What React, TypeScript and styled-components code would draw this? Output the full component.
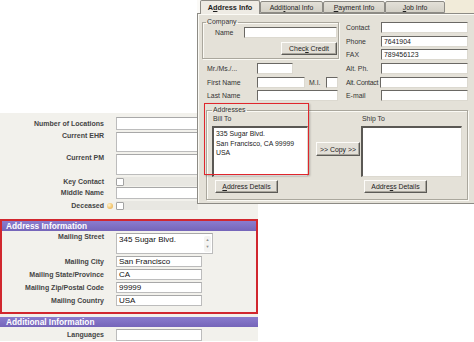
import React from 'react';
import styled, { createGlobalStyle } from 'styled-components';

const Global = createGlobalStyle`
  html, body { margin: 0; padding: 0; background: #fff; }
  body { width: 474px; height: 342px; overflow: hidden; }
`;

const Canvas = styled.div`
  position: relative;
  width: 474px;
  height: 342px;
  overflow: hidden;
  background: #fff;
  font-family: "Liberation Sans", Arial, sans-serif;
`;

/* ---------------- Web form (background) ---------------- */

const Form = styled.div`
  width: 258px;
  margin-top: 113px;
  padding-top: 4px;
  background: #f2f1ec;
  display: flex;
  flex-direction: column;
  gap: 2px;
`;

const Row = styled.div<{ $h: number; $top?: boolean }>`
  display: grid;
  grid-template-columns: 104px 12px 1fr;
  height: ${(p) => p.$h}px;
  align-items: ${(p) => (p.$top ? 'start' : 'center')};
`;

const Label = styled.div`
  text-align: right;
  font-size: 7px;
  line-height: 8px;
  font-weight: 700;
  color: #454545;
  white-space: nowrap;
`;

const HelpDot = styled.span`
  justify-self: start;
  margin-left: 3px;
  width: 6px;
  height: 6px;
  border-radius: 50%;
  background: radial-gradient(circle at 35% 35%, #fff3d6 0, #f5cf80 45%, #e6a94a 100%);
`;

const Box = styled.div<{ $w: number }>`
  grid-column: 3;
  box-sizing: border-box;
  width: ${(p) => p.$w}px;
  height: 100%;
  background: #fff;
  border: 1px solid #bcbcbc;
  border-top-color: #a8a8a8;
  font-size: 8px;
  line-height: 10px;
  color: #111;
  padding: 0 2px;
  white-space: nowrap;
  overflow: hidden;
`;

const AreaBox = styled(Box)`
  display: flex;
  justify-content: space-between;
  padding: 1px 0 0 2px;
`;

const ScrollArrows = styled.div`
  width: 7px;
  margin: 1px 1px 1px 0;
  display: flex;
  flex-direction: column;
  justify-content: space-between;
  align-items: center;
  padding: 2px 0 3px;
  border-radius: 2px;
  background: #f4f4f2;
  color: #8f8f8f;
  font-size: 4px;
  line-height: 4px;
`;

const CheckCell = styled.div`
  grid-column: 3;
  display: flex;
  align-items: center;
  width: 82px;
  height: 9px;
  background: #e8e7e2;
`;

const Check = styled.span`
  box-sizing: border-box;
  width: 8px;
  height: 8px;
  background: #fff;
  border: 1px solid #a3a3a3;
  border-radius: 1px;
`;

const Section = styled.div`
  margin-top: 8px;
  padding: 2px 0 8px;
  outline: 2px solid #d1272e;
  outline-offset: -2px;
  display: flex;
  flex-direction: column;
  gap: 2px;
`;

const SectionHeader = styled.div<{ $gap?: number }>`
  height: 10px;
  margin-top: ${(p) => p.$gap ?? 0}px;
  padding-left: 6px;
  background: linear-gradient(#8a7cce, #7565b9);
  color: #fff;
  font-size: 8.3px;
  font-weight: 700;
  line-height: 10px;
  white-space: nowrap;
`;

/* ---------------- Windows dialog (on top) ---------------- */

const Dialog = styled.div`
  position: absolute;
  left: 197px;
  top: 0;
  width: 277px;
  height: 204px;
  display: flex;
  flex-direction: column;
  font-family: "Liberation Sans", Tahoma, sans-serif;
  font-size: 6.9px;
  color: #222;
`;

const TabStrip = styled.div`
  display: flex;
  align-items: flex-end;
  height: 13px;
  padding-left: 3px;
  background: #fbfaf7;
`;

const Tab = styled.div<{ $active?: boolean; $w: number }>`
  position: relative;
  z-index: ${(p) => (p.$active ? 2 : 1)};
  box-sizing: border-box;
  width: ${(p) => p.$w}px;
  height: ${(p) => (p.$active ? 14 : 12)}px;
  margin-bottom: ${(p) => (p.$active ? -1 : 0)}px;
  display: flex;
  align-items: center;
  justify-content: center;
  background: ${(p) => (p.$active ? '#eeebe4' : 'linear-gradient(#e3e0d8, #d3d0c6)')};
  border: 1px solid #8d8b85;
  border-bottom: ${(p) => (p.$active ? 'none' : '1px solid #8d8b85')};
  border-radius: 2px 2px 0 0;
  font-weight: ${(p) => (p.$active ? 700 : 400)};
  font-size: ${(p) => (p.$active ? 7.3 : 6.9)}px;
  color: #1e1e1e;
  white-space: nowrap;
`;

const TabFiller = styled.div`
  flex: 1;
  align-self: stretch;
  background: #f1ebd9;
`;

const Panel = styled.div`
  flex: 1;
  box-sizing: border-box;
  background: #e4e1d8;
  border: 1px solid #8d8b85;
  border-right: none;
  box-shadow: inset 1px 1px 0 #fbfaf5;
  padding: 4px 6px 0 4px;
  display: flex;
  flex-direction: column;
`;

const TopArea = styled.div`
  display: flex;
  gap: 7px;
  align-items: flex-start;
`;

const LeftCol = styled.div`
  width: 137px;
  display: flex;
  flex-direction: column;
`;

const Group = styled.fieldset<{ $pl: number; $pr: number; $pb: number }>`
  margin: 0;
  min-width: 0;
  box-sizing: border-box;
  padding: 1px ${(p) => p.$pr}px ${(p) => p.$pb}px ${(p) => p.$pl}px;
  border: 1px solid #aaa79d;
  box-shadow: inset 1px 1px 0 #fbfaf5, 1px 1px 0 #fbfaf5;
`;

const Legend = styled.legend`
  padding: 0 1px;
  font-size: 6.9px;
  line-height: 8px;
  color: #333;
`;

const GroupBody = styled.div`
  display: flex;
  flex-direction: column;
`;

const DRow = styled.div<{ $indent?: number; $lw: number }>`
  display: grid;
  grid-template-columns: ${(p) => p.$lw}px auto auto auto;
  justify-content: start;
  align-items: center;
  height: 11px;
  padding-left: ${(p) => p.$indent ?? 0}px;
  white-space: nowrap;
  color: #333;
`;

const DText = styled.span<{ $tight?: boolean }>`
  letter-spacing: ${(p) => (p.$tight ? '-0.3px' : 'normal')};
`;

const DInput = styled.div<{ $w: number; $ml?: number }>`
  box-sizing: border-box;
  width: ${(p) => p.$w}px;
  margin-left: ${(p) => p.$ml ?? 0}px;
  height: 11px;
  background: #fff;
  border: 1px solid #dcd9d0;
  border-top-color: #6a6864;
  border-left-color: #6a6864;
  padding: 0 2px;
  font-size: 6.9px;
  line-height: 9px;
  color: #222;
`;

const DLabelInline = styled.span<{ $w: number; $ml: number }>`
  width: ${(p) => p.$w}px;
  margin-left: ${(p) => p.$ml}px;
`;

const DButton = styled.div<{ $w: number; $h?: number }>`
  box-sizing: border-box;
  width: ${(p) => p.$w}px;
  height: ${(p) => p.$h ?? 13}px;
  display: flex;
  align-items: center;
  justify-content: center;
  background: #e2dfd7;
  border: 1px solid #5c5b57;
  border-top-color: #fdfcf9;
  border-left-color: #fdfcf9;
  box-shadow: inset -1px -1px 0 #a8a59c;
  font-size: 6.9px;
  color: #222;
  white-space: nowrap;
`;

const RightAligned = styled.div`
  display: flex;
  justify-content: flex-end;
  margin-top: 4px;
`;

const Stack = styled.div<{ $mt: number }>`
  display: flex;
  flex-direction: column;
  gap: 2.7px;
  margin-top: ${(p) => p.$mt}px;
`;

const RightCol = styled.div`
  flex: 1;
`;

const AddrGroupWrap = styled.div`
  margin: 5px 0 0 4px;
`;

const AddrRow = styled.div`
  display: flex;
  align-items: flex-start;
`;

const AddrCol = styled.div<{ $w: number; $ml?: number }>`
  width: ${(p) => p.$w}px;
  margin-left: ${(p) => p.$ml ?? 0}px;
  display: flex;
  flex-direction: column;
`;

const AddrLabel = styled.div`
  height: 8px;
  line-height: 8px;
  padding-left: 1px;
  color: #333;
`;

const AddrBox = styled.div`
  box-sizing: border-box;
  height: 51px;
  margin-top: 3px;
  background: #fff;
  border: 1px solid #dcd9d0;
  border-top: 2px solid #5a5854;
  border-left: 2px solid #5a5854;
  padding: 1px 2px;
  font-size: 6.9px;
  line-height: 9.5px;
  color: #222;
  white-space: pre;
`;

const AddrButtonSlot = styled.div`
  margin: 3px 0 0 3px;
`;

const CopySlot = styled.div`
  margin: 27px 0 0 8px;
`;

const RedMark = styled.div`
  position: absolute;
  left: 7px;
  top: 103px;
  width: 105px;
  height: 72px;
  box-sizing: border-box;
  border: 1.5px solid #e0262c;
  box-shadow: 1px 1px 2px rgba(0, 0, 0, 0.25);
  pointer-events: none;
`;

export default function App() {
  return (
    <Canvas>
      <Global />

      <Form>
        <Row $h={13}>
          <Label>Number of Locations</Label>
          <Box $w={86} />
        </Row>
        <Row $h={20} $top>
          <Label>Current EHR</Label>
          <Box $w={86} />
        </Row>
        <Row $h={21} $top>
          <Label>Current PM</Label>
          <Box $w={86} />
        </Row>
        <Row $h={8}>
          <Label>Key Contact</Label>
          <CheckCell>
            <Check />
          </CheckCell>
        </Row>
        <Row $h={12}>
          <Label>Middle Name</Label>
          <Box $w={86} />
        </Row>
        <Row $h={8}>
          <Label>Deceased</Label>
          <HelpDot />
          <CheckCell>
            <Check />
          </CheckCell>
        </Row>

        <Section>
          <SectionHeader>Address Information</SectionHeader>
          <Row $h={21} $top>
            <Label>Mailing Street</Label>
            <AreaBox $w={97}>
              <span>345 Sugar Blvd.</span>
              <ScrollArrows>
                <span>▲</span>
                <span>▼</span>
              </ScrollArrows>
            </AreaBox>
          </Row>
          <Row $h={11}>
            <Label>Mailing City</Label>
            <Box $w={86}>San Francisco</Box>
          </Row>
          <Row $h={11}>
            <Label>Mailing State/Province</Label>
            <Box $w={86}>CA</Box>
          </Row>
          <Row $h={11}>
            <Label>Mailing Zip/Postal Code</Label>
            <Box $w={86}>99999</Box>
          </Row>
          <Row $h={11}>
            <Label>Mailing Country</Label>
            <Box $w={86}>USA</Box>
          </Row>
        </Section>

        <SectionHeader $gap={1}>Additional Information</SectionHeader>
        <Row $h={12}>
          <Label>Languages</Label>
          <Box $w={86} />
        </Row>
      </Form>

      <Dialog>
        <TabStrip>
          <Tab $active $w={60}>
            A<u>d</u>dress Info
          </Tab>
          <Tab $w={63}>
            Addi<u>t</u>ional Info
          </Tab>
          <Tab $w={62}>
            <u>P</u>ayment Info
          </Tab>
          <Tab $w={60}>
            <u>J</u>ob Info
          </Tab>
          <TabFiller />
        </TabStrip>

        <Panel>
          <TopArea>
            <LeftCol>
              <Group $pl={3} $pr={1} $pb={3}>
                <Legend>Company</Legend>
                <GroupBody>
                  <DRow $indent={9} $lw={29}>
                    <DText>Name</DText>
                    <DInput $w={93} />
                  </DRow>
                  <RightAligned>
                    <DButton $w={56}>
                      Chec<u>k</u>&nbsp;Credit
                    </DButton>
                  </RightAligned>
                </GroupBody>
              </Group>
              <Stack $mt={4}>
                <DRow $indent={5} $lw={50}>
                  <DText>Mr./Ms./...</DText>
                  <DInput $w={36} />
                </DRow>
                <DRow $indent={5} $lw={50}>
                  <DText>First Name</DText>
                  <DInput $w={48} />
                  <DLabelInline $w={17} $ml={4}>
                    M.I.
                  </DLabelInline>
                  <DInput $w={12} />
                </DRow>
                <DRow $indent={5} $lw={50}>
                  <DText>Last Name</DText>
                  <DInput $w={81} />
                </DRow>
              </Stack>
            </LeftCol>

            <RightCol>
              <Stack $mt={4}>
                <DRow $lw={35}>
                  <DText>Contact</DText>
                  <DInput $w={87} />
                </DRow>
                <DRow $lw={35}>
                  <DText>Phone</DText>
                  <DInput $w={87}>7641904</DInput>
                </DRow>
                <DRow $lw={35}>
                  <DText>FAX</DText>
                  <DInput $w={87}>789456123</DInput>
                </DRow>
                <DRow $lw={35}>
                  <DText>Alt. Ph.</DText>
                  <DInput $w={87} />
                </DRow>
                <DRow $lw={34}>
                  <DText $tight>Alt. Contact</DText>
                  <DInput $w={88} />
                </DRow>
                <DRow $lw={35}>
                  <DText>E-mail</DText>
                  <DInput $w={87} />
                </DRow>
              </Stack>
            </RightCol>
          </TopArea>

          <AddrGroupWrap>
            <Group $pl={5} $pr={5} $pb={6}>
              <Legend>Addresses</Legend>
              <AddrRow>
                <AddrCol $w={96}>
                  <AddrLabel>Bill To</AddrLabel>
                  <AddrBox>{'335 Sugar Blvd.\nSan Francisco, CA 99999\nUSA'}</AddrBox>
                  <AddrButtonSlot>
                    <DButton $w={63}>
                      <u>A</u>ddress Details
                    </DButton>
                  </AddrButtonSlot>
                </AddrCol>
                <CopySlot>
                  <DButton $w={44} $h={14}>
                    &gt;&gt; Copy &gt;&gt;
                  </DButton>
                </CopySlot>
                <AddrCol $w={101} $ml={1}>
                  <AddrLabel>Ship To</AddrLabel>
                  <AddrBox />
                  <AddrButtonSlot>
                    <DButton $w={63}>
                      Addre<u>s</u>s Details
                    </DButton>
                  </AddrButtonSlot>
                </AddrCol>
              </AddrRow>
            </Group>
          </AddrGroupWrap>
        </Panel>

        <RedMark />
      </Dialog>
    </Canvas>
  );
}
